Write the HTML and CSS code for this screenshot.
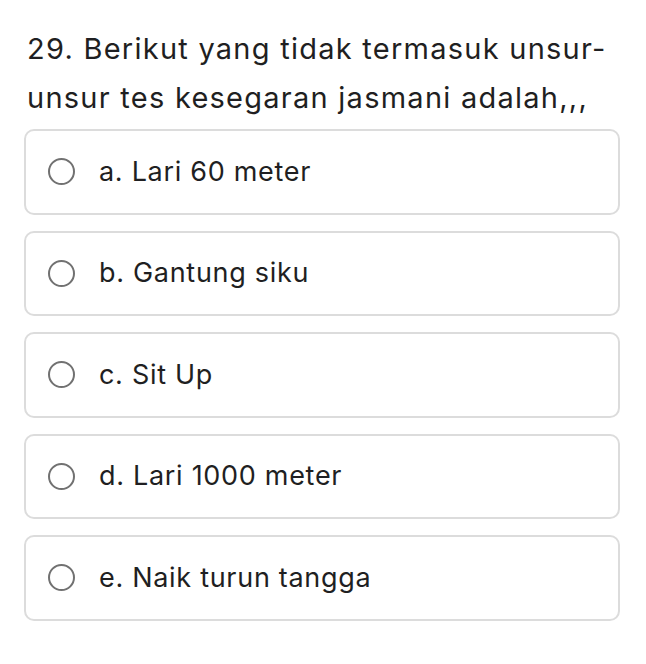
FILE: index.html
```html
<!DOCTYPE html>
<html>
<head>
<meta charset="utf-8">
<link rel="stylesheet" href="styles.css">
</head>
<body>
<div class="quiz">
  <p class="question">29. Berikut yang tidak termasuk unsur-unsur tes kesegaran jasmani adalah,,,</p>
  <ul class="options">
    <li class="option"><span class="radio"></span><span class="label">a. Lari 60 meter</span></li>
    <li class="option"><span class="radio"></span><span class="label">b. Gantung siku</span></li>
    <li class="option"><span class="radio"></span><span class="label">c. Sit Up</span></li>
    <li class="option"><span class="radio"></span><span class="label">d. Lari 1000 meter</span></li>
    <li class="option"><span class="radio"></span><span class="label">e. Naik turun tangga</span></li>
  </ul>
</div>
</body>
</html>
```
FILE: styles.css
```css
html, body {
  margin: 0;
  padding: 0;
  background: #ffffff;
}
body {
  font-family: Inter, "Noto Sans", sans-serif;
  color: #1f1f22;
}
.quiz {
  padding: 24px 26px 0 24px;
}
.question {
  margin: 0 0 7px 0;
  padding-left: 3px;
  font-size: 29px;
  line-height: 49px;
  letter-spacing: 1.25px;
}
.options {
  list-style: none;
  margin: 0;
  padding: 0;
  display: flex;
  flex-direction: column;
  gap: 16px;
}
.option {
  box-sizing: border-box;
  height: 85.5px;
  border: 2px solid #dcdcdc;
  border-radius: 10px;
  display: flex;
  align-items: center;
  padding-left: 22px;
  gap: 24px;
}
.radio {
  box-sizing: border-box;
  width: 27px;
  height: 27px;
  border: 2px solid #717171;
  border-radius: 50%;
  flex-shrink: 0;
}
.label {
  font-size: 27px;
  line-height: 32px;
  letter-spacing: 0.7px;
}
```
